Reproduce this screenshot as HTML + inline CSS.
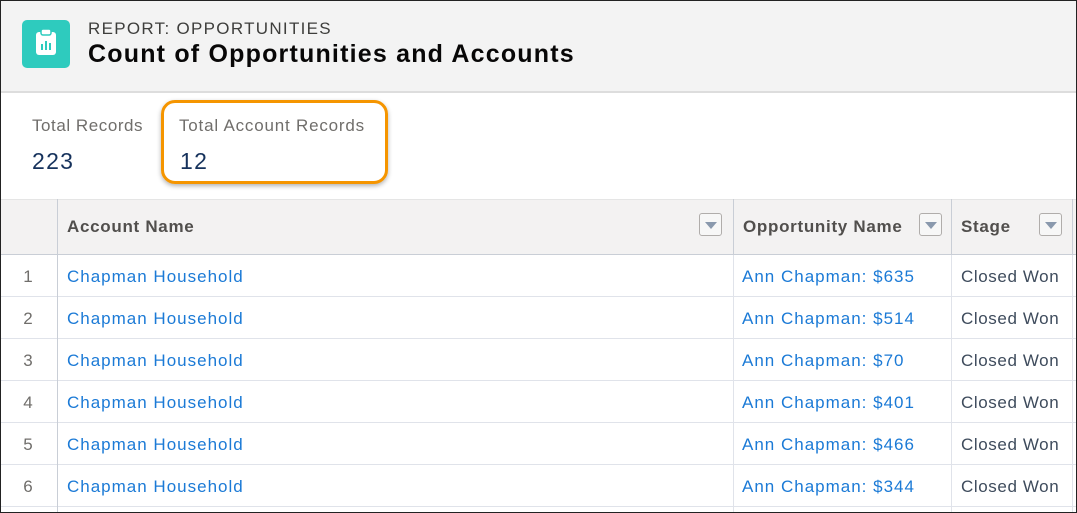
<!DOCTYPE html><html><head><style>
*{box-sizing:border-box;margin:0;padding:0}
body{width:1077px;height:513px;overflow:hidden;font-family:"Liberation Sans",sans-serif;background:#fff;position:relative}
.frame{position:absolute;left:0;top:0;width:1077px;height:513px;border:1.5px solid #222;z-index:10;pointer-events:none}
.hdr{position:absolute;left:0;top:0;width:1077px;height:93px;background:#f3f3f3;border-bottom:2px solid #ddd}
.icon{position:absolute;left:22px;top:20px;width:48px;height:48px;background:#2ecbbe;border-radius:5px}
.t1{position:absolute;left:88px;top:19px;font-size:17px;color:#3e3e3c;letter-spacing:1.3px}
.t2{position:absolute;left:88px;top:40px;font-size:25px;color:#080707;font-weight:bold;letter-spacing:1.2px}
.lab{position:absolute;top:116px;font-size:17px;color:#706e6b}
.val{position:absolute;top:148px;font-size:23px;color:#16325c;letter-spacing:1.3px}
.hl{position:absolute;left:161px;top:100px;width:227px;height:84px;border:3px solid #f59500;border-radius:14px;box-shadow:0 2px 5px rgba(0,0,0,.3)}
.th{position:absolute;top:199px;height:56px;background:#f3f2f2;border-bottom:1px solid #c9ced6;border-top:1px solid #e5e5e5}
.thc{position:absolute;top:199px;height:56px;border-left:1px solid #c9ced6;font-size:17px;font-weight:bold;color:#514f4d;line-height:56px;padding-left:9px;letter-spacing:0.7px}
.dd{position:absolute;top:14px;width:23px;height:23px;border:1px solid #b0adab;border-radius:3px;background:#f7f7f7}
.dd:after{content:"";position:absolute;left:5px;top:8px;border-left:6px solid transparent;border-right:6px solid transparent;border-top:7px solid #8a99ad}
.row{position:absolute;left:0;width:1077px;height:42px;border-bottom:1px solid #e0e3ea;font-size:17px;line-height:44px;letter-spacing:1px}
.row span{position:absolute;top:0}
.n{left:0;width:57px;text-align:center;color:#706e6b}
.a{left:67px;color:#1b7ad6}.o{left:742px;color:#1b7ad6}.s{left:961px;color:#3e4b5c;letter-spacing:0.6px}
.vl{position:absolute;top:255px;height:258px;border-left:1px solid #e0e3ea}
</style></head><body>
<div class="hdr">
<div class="icon"><svg width="48" height="48"><rect x="14" y="12" width="20" height="23" rx="3" fill="#fff"/><rect x="19" y="9" width="10" height="6" rx="2" fill="#fff" stroke="#2ecbbe" stroke-width="1.5"/><rect x="19" y="24" width="2" height="6" fill="#2ecbbe"/><rect x="23" y="21" width="2" height="9" fill="#2ecbbe"/><rect x="27" y="23" width="2" height="7" fill="#2ecbbe"/></svg></div>
<div class="t1">REPORT: OPPORTUNITIES</div>
<div class="t2">Count of Opportunities and Accounts</div>
</div>
<div class="lab" style="left:32px;letter-spacing:0.55px">Total Records</div><div class="val" style="left:32px">223</div>
<div class="lab" style="left:179px;letter-spacing:0.8px">Total Account Records</div><div class="val" style="left:180px">12</div>
<div class="hl"></div>
<div class="th" style="left:0;width:1077px"></div>
<div class="thc" style="left:57px;width:676px">Account Name<div class="dd" style="left:641px"></div></div>
<div class="thc" style="left:733px;width:218px">Opportunity Name<div class="dd" style="left:185px"></div></div>
<div class="thc" style="left:951px;width:121px">Stage<div class="dd" style="left:87px"></div></div>
<div class="thc" style="left:1072px;width:5px"></div>
<div class="row" style="top:255px"><span class="n">1</span><span class="a">Chapman Household</span><span class="o">Ann Chapman: $635</span><span class="s">Closed Won</span></div>
<div class="row" style="top:297px"><span class="n">2</span><span class="a">Chapman Household</span><span class="o">Ann Chapman: $514</span><span class="s">Closed Won</span></div>
<div class="row" style="top:339px"><span class="n">3</span><span class="a">Chapman Household</span><span class="o">Ann Chapman: $70</span><span class="s">Closed Won</span></div>
<div class="row" style="top:381px"><span class="n">4</span><span class="a">Chapman Household</span><span class="o">Ann Chapman: $401</span><span class="s">Closed Won</span></div>
<div class="row" style="top:423px"><span class="n">5</span><span class="a">Chapman Household</span><span class="o">Ann Chapman: $466</span><span class="s">Closed Won</span></div>
<div class="row" style="top:465px"><span class="n">6</span><span class="a">Chapman Household</span><span class="o">Ann Chapman: $344</span><span class="s">Closed Won</span></div>
<div class="vl" style="left:57px;border-color:#c9ced6"></div><div class="vl" style="left:733px"></div><div class="vl" style="left:951px"></div><div class="vl" style="left:1072px"></div>
<div class="frame"></div>
</body></html>
